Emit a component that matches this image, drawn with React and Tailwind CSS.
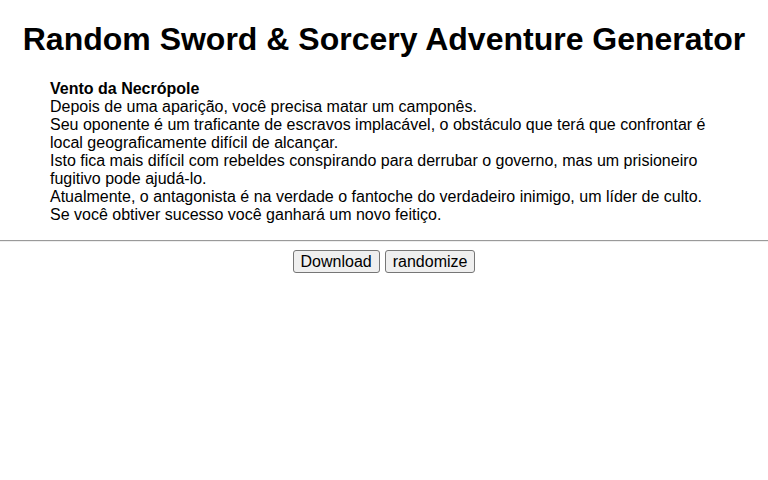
export default function App() {
  const lines = [
    "Depois de uma aparição, você precisa matar um camponês.",
    "Seu oponente é um traficante de escravos implacável, o obstáculo que terá que confrontar é local geograficamente difícil de alcançar.",
    "Isto fica mais difícil com rebeldes conspirando para derrubar o governo, mas um prisioneiro fugitivo pode ajudá-lo.",
    "Atualmente, o antagonista é na verdade o fantoche do verdadeiro inimigo, um líder de culto.",
    "Se você obtiver sucesso você ganhará um novo feitiço.",
  ];
  return (
    <div className="min-h-[480px] bg-white text-black font-['Liberation_Sans',Arial,sans-serif]">
      <h1 className="pt-[21px] text-center text-[32px] font-bold leading-[37px]">
        Random Sword &amp; Sorcery Adventure Generator
      </h1>
      <div className="mt-[22px] px-[50px] text-[16px] leading-[18px]">
        <div className="font-bold">Vento da Necrópole</div>
        {lines.map((l, i) => (
          <div key={i}>{l}</div>
        ))}
      </div>
      <div className="mt-4 h-px bg-[#9a9a9a]" />
      <div className="h-px bg-[#eeeeee]" />
      <div className="mt-2 flex justify-center gap-[5px]">
        <button className="h-[23px] rounded-[3px] border border-[#767676] bg-[#efefef] px-[7px] text-[16px] leading-[18px]">
          Download
        </button>
        <button className="h-[23px] rounded-[3px] border border-[#767676] bg-[#efefef] px-[7px] text-[16px] leading-[18px]">
          randomize
        </button>
      </div>
    </div>
  );
}
